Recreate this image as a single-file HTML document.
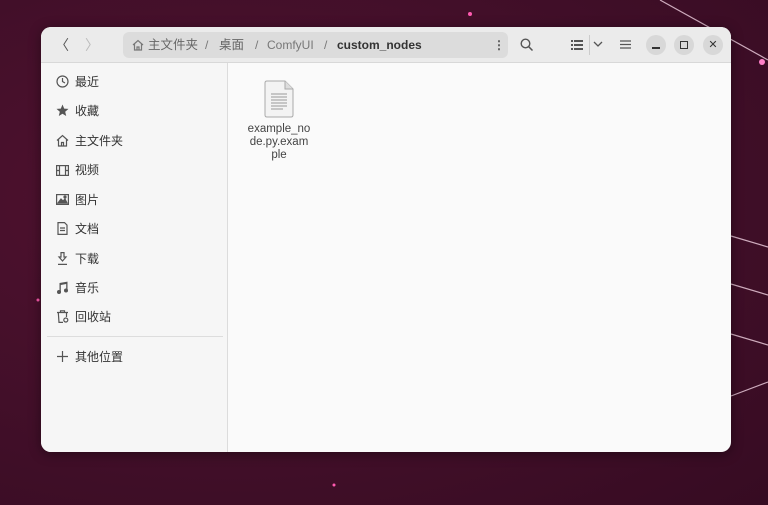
<!DOCTYPE html>
<html><head><meta charset="utf-8"><style>
*{margin:0;padding:0;box-sizing:border-box}
body{width:768px;height:505px;overflow:hidden;position:relative;background:radial-gradient(ellipse at 30% 40%,#521230 0%,#420f29 55%,#360b22 100%);font-family:"Liberation Sans","Noto Sans CJK SC",sans-serif;}
.win{position:absolute;left:41px;top:27px;width:690px;height:425px;background:#fafafa;border-radius:10px;overflow:hidden;box-shadow:0 2px 12px rgba(0,0,0,.4)}
.hdr{position:absolute;left:0;top:0;width:690px;height:36px;background:#ebebeb;border-bottom:1px solid #d8d8d8}
.side{position:absolute;left:0;top:36px;width:187px;height:389px;background:#f6f6f6;border-right:1px solid #dcdcdc}
.path{position:absolute;left:82px;top:5px;width:385px;height:26px;background:#dcdcdc;border-radius:6px;font-size:12px;color:#777;line-height:26px}
.path span{position:absolute;top:0}
.it{position:absolute;left:34px;font-size:12px;color:#333;height:20px;line-height:20px}
.ic{position:absolute;left:15px}
.btn{position:absolute;top:8px;width:20px;height:20px;border-radius:50%;background:#d8d8d8;text-align:center;line-height:20px;font-size:11px;color:#333}
</style></head><body>
<svg width="768" height="505" style="position:absolute;left:0;top:0">
<g stroke="#e8c8d8" stroke-width="1.2" fill="none" opacity=".85">
<line x1="660" y1="0" x2="768" y2="60"/>
<line x1="731" y1="236" x2="768" y2="247"/>
<line x1="731" y1="284" x2="768" y2="295"/>
<line x1="731" y1="334" x2="768" y2="345"/>
<line x1="731" y1="396" x2="768" y2="382"/>
</g>
<circle cx="470" cy="14" r="2" fill="#ff5ab0"/>
<circle cx="762" cy="62" r="3" fill="#ff80c8"/>
<circle cx="334" cy="485" r="1.5" fill="#ff5ab0"/>
<circle cx="38" cy="300" r="1.5" fill="#ff5ab0"/>
</svg>
<div class="win">
<div class="hdr">
<div style="position:absolute;left:14px;top:8px;color:#555;font-size:14px">〈</div>
<div style="position:absolute;left:44px;top:8px;color:#bbb;font-size:14px">〉</div>
<div class="path">
<svg style="position:absolute;left:9px;top:7px" width="12" height="12" fill="none" stroke="#777" stroke-width="1.2"><path d="M1,6 L6,1.5 L11,6 M2.5,5 V11 H9.5 V5 M5,11 V8 H7 V11"/></svg>
<span style="left:25px;color:#666;font-size:12.5px">主文件夹</span>
<span style="left:82px">/</span>
<span style="left:96px;color:#666;font-size:12.5px">桌面</span>
<span style="left:132px">/</span>
<span style="left:144px;color:#777">ComfyUI</span>
<span style="left:201px">/</span>
<span style="left:214px;color:#333;font-weight:bold">custom_nodes</span>
<span style="left:370px;color:#555;font-weight:bold">⋮</span>
</div>
<svg style="position:absolute;left:479px;top:11px" width="14" height="14"><circle cx="5.5" cy="5.5" r="4.3" stroke="#555" stroke-width="1.4" fill="none"/><line x1="8.7" y1="8.7" x2="12.5" y2="12.5" stroke="#555" stroke-width="1.5"/></svg>
<svg style="position:absolute;left:530px;top:12px" width="12" height="12" fill="#555"><rect x="0" y="1" width="2" height="2"/><rect x="3" y="1" width="9" height="2"/><rect x="0" y="5" width="2" height="2"/><rect x="3" y="5" width="9" height="2"/><rect x="0" y="9" width="2" height="2"/><rect x="3" y="9" width="9" height="2"/></svg>
<div style="position:absolute;left:548px;top:8px;width:1px;height:20px;background:#ccc"></div>
<svg style="position:absolute;left:552px;top:13px" width="10" height="8"><polyline points="1,2 5,6 9,2" stroke="#555" stroke-width="1.3" fill="none"/></svg>
<svg style="position:absolute;left:579px;top:12px" width="11" height="11" stroke="#555" stroke-width="1.3"><line x1="0" y1="2" x2="11" y2="2"/><line x1="0" y1="5.5" x2="11" y2="5.5"/><line x1="0" y1="9" x2="11" y2="9"/></svg>
<div class="btn" style="left:605px"><div style="position:absolute;left:6px;top:12px;width:8px;height:1.5px;background:#333"></div></div>
<div class="btn" style="left:633px"><div style="position:absolute;left:6px;top:6px;width:8px;height:8px;border:1.3px solid #333"></div></div>
<div class="btn" style="left:662px">✕</div>
</div>
<div class="side">
<svg class="ic" style="top:12px" width="13" height="13" fill="none" stroke="#555" stroke-width="1.2"><circle cx="6.5" cy="6.5" r="5.5"/><path d="M6.5,3 V6.5 L9,8"/></svg>
<div class="it" style="top:9px">最近</div>
<svg class="ic" style="top:41px" width="13" height="13" fill="#555"><path d="M6.5,0.5 L8.2,4.6 L12.5,4.9 L9.2,7.7 L10.2,12 L6.5,9.7 L2.8,12 L3.8,7.7 L0.5,4.9 L4.8,4.6Z"/></svg>
<div class="it" style="top:38px">收藏</div>
<svg class="ic" style="top:71px" width="13" height="13" fill="none" stroke="#555" stroke-width="1.2"><path d="M1,6.5 L6.5,1.5 L12,6.5 M2.5,5.5 V12 H10.5 V5.5 M5.5,12 V8.5 H7.5 V12"/></svg>
<div class="it" style="top:68px">主文件夹</div>
<svg class="ic" style="top:101px" width="13" height="13" fill="none" stroke="#555" stroke-width="1.2"><rect x="0.6" y="1.6" width="11.8" height="9.8"/><path d="M3.5,1.6 V11.4 M9.5,1.6 V11.4 M0.6,6.5 H3.5 M9.5,6.5 H12.4"/></svg>
<div class="it" style="top:97px">视频</div>
<svg class="ic" style="top:130px" width="13" height="13" fill="none" stroke="#555" stroke-width="1.2"><rect x="0.6" y="1.6" width="11.8" height="9.8"/><path d="M2,10 L5,6 L7,8 L9,6 L11,10Z" fill="#555"/><circle cx="9" cy="4" r="1" fill="#555"/></svg>
<div class="it" style="top:127px">图片</div>
<svg class="ic" style="top:159px" width="13" height="13" fill="none" stroke="#555" stroke-width="1.2"><path d="M2,0.6 H8.5 L11,3.1 V12.4 H2Z M4,6 H9 M4,8.5 H9"/></svg>
<div class="it" style="top:156px">文档</div>
<svg class="ic" style="top:189px" width="13" height="13" fill="none" stroke="#555" stroke-width="1.2"><path d="M5,0.6 H8 V5 H10 L6.5,9 L3,5 H5Z M2,12.4 H11"/></svg>
<div class="it" style="top:186px">下载</div>
<svg class="ic" style="top:218px" width="13" height="13" fill="#555"><path d="M3.5,2 L11.5,0.6 V9.5 H10.2 V3 L4.8,4 V11 H3.5Z"/><circle cx="3" cy="11" r="2"/><circle cx="10" cy="9.5" r="2"/></svg>
<div class="it" style="top:215px">音乐</div>
<svg class="ic" style="top:247px" width="13" height="13" fill="none" stroke="#555" stroke-width="1.2"><path d="M1,2.5 H12 M4.5,2.5 V0.8 H8.5 V2.5 M2.3,2.5 L3,12.4 H7 M10.5,2.5 V7"/><circle cx="9.8" cy="10" r="2"/></svg>
<div class="it" style="top:244px">回收站</div>
<div style="position:absolute;left:6px;top:273px;width:176px;height:1px;background:#ddd"></div>
<svg class="ic" style="top:287px" width="13" height="13" stroke="#555" stroke-width="1.2"><path d="M6.5,1 V12 M1,6.5 H12"/></svg>
<div class="it" style="top:284px">其他位置</div>
</div>
<svg style="position:absolute;left:222px;top:53px" width="32" height="38"><path d="M2,3 Q2,1 4,1 L22,1 L30,9 L30,35 Q30,37 28,37 L4,37 Q2,37 2,35 Z" fill="#f3f3f3" stroke="#aaa"/><path d="M22,1 L22,9 L30,9" fill="#ddd" stroke="#aaa"/><g stroke="#999" stroke-width="1"><line x1="8" y1="14" x2="24" y2="14"/><line x1="8" y1="17" x2="24" y2="17"/><line x1="8" y1="20" x2="24" y2="20"/><line x1="8" y1="23" x2="24" y2="23"/><line x1="8" y1="26" x2="24" y2="26"/><line x1="8" y1="29" x2="20" y2="29"/></g></svg>
<div style="position:absolute;left:201px;top:96px;width:74px;text-align:center;font-size:11.5px;line-height:13px;color:#444">example_no<br>de.py.exam<br>ple</div>
</div>
</body></html>
